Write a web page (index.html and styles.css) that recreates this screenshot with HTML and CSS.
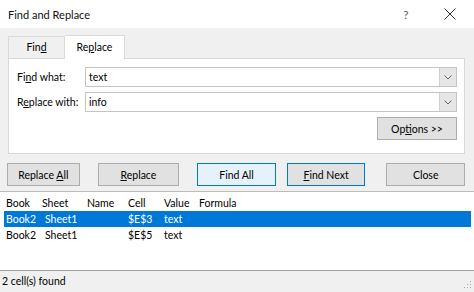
FILE: index.html
```html
<!DOCTYPE html>
<html lang="en">
	<head>
		<meta charset="UTF-8" />
		<title>Find and Replace</title>
		<link rel="stylesheet" href="styles.css">
	</head>
	<body>
		<div class="window">
			<div class="titlebar">
				<span class="title">Find and Replace</span>
				<span class="help">?</span>
				<span class="close">
					<svg width="12" height="12" viewBox="0 0 12 12">
						<path d="M0.5 0.5 L11.5 11.5 M11.5 0.5 L0.5 11.5" stroke="#333" stroke-width="1" fill="none" />
					</svg>
				</span>
			</div>

			<div class="main">
				<div class="tabs">
					<div class="tab">Fin<u>d</u></div>
					<div class="tab active">Re<u>p</u>lace</div>
				</div>

				<div class="panel">
					<div class="field">
						<label>Fi<u>n</u>d what:</label>
						<div class="combo">
							<span class="value">text</span>
							<span class="drop">
								<svg width="8" height="5" viewBox="0 0 8 5"><path d="M0.5 0.5 L4 4 L7.5 0.5" stroke="#666" fill="none" /></svg>
							</span>
						</div>
					</div>
					<div class="field">
						<label>R<u>e</u>place with:</label>
						<div class="combo">
							<span class="value">info</span>
							<span class="drop">
								<svg width="8" height="5" viewBox="0 0 8 5"><path d="M0.5 0.5 L4 4 L7.5 0.5" stroke="#666" fill="none" /></svg>
							</span>
						</div>
					</div>
					<div class="panel-foot">
						<button class="btn options">Op<u>t</u>ions &gt;&gt;</button>
					</div>
				</div>

				<div class="actions">
					<button class="btn replace-all">Replace <u>A</u>ll</button>
					<button class="btn replace"><u>R</u>eplace</button>
					<button class="btn find-all">Find All</button>
					<button class="btn find-next"><u>F</u>ind Next</button>
					<button class="btn close-btn">Close</button>
				</div>
			</div>

			<div class="results">
				<div class="row head">
					<span>Book</span><span>Sheet</span><span>Name</span><span>Cell</span><span>Value</span><span>Formula</span>
				</div>
				<div class="row selected">
					<span>Book2</span><span class="sheet">Sheet1</span><span></span><span>$E$3</span><span>text</span><span></span>
				</div>
				<div class="row">
					<span>Book2</span><span class="sheet">Sheet1</span><span></span><span>$E$5</span><span>text</span><span></span>
				</div>
			</div>

			<div class="status">
				<span>2 cell(s) found</span>
				<svg class="grip" width="8" height="8" viewBox="0 0 8 8">
					<rect x="6" y="0" width="1" height="1" fill="#aaa" />
					<rect x="3" y="3" width="1" height="1" fill="#aaa" />
					<rect x="6" y="3" width="1" height="1" fill="#aaa" />
					<rect x="0" y="6" width="1" height="1" fill="#aaa" />
					<rect x="3" y="6" width="1" height="1" fill="#aaa" />
					<rect x="6" y="6" width="1" height="1" fill="#aaa" />
				</svg>
			</div>
		</div>
	</body>
</html>
```

FILE: styles.css
```css
body {
	margin: 0;
	font-family: Lato, "Noto Sans", sans-serif;
	font-size: 10.5px;
	color: #000;
	background: #fff;
}
.window {
	width: 474px;
	height: 292px;
	overflow: hidden;
	background: #f0f0f0;
}
.titlebar {
	height: 28px;
	background: #fff;
	display: flex;
	align-items: center;
	padding: 0 0 0 8px;
}
.title {
	flex: 1;
	font-size: 11px;
	color: #111;
}
.help {
	width: 16px;
	text-align: center;
	color: #555;
	font-size: 11px;
	margin-right: 30px;
}
.close {
	width: 12px;
	height: 12px;
	margin-right: 18px;
	display: flex;
}
.main {
	padding: 7px 9px 5px 8px;
}
.tabs {
	display: flex;
	align-items: flex-end;
	height: 23px;
}
.tab {
	width: 55px;
	height: 21px;
	line-height: 21px;
	text-align: center;
	border: 1px solid #d9d9d9;
	border-bottom: none;
	background: #f0f0f0;
}
.tab.active {
	width: 59px;
	height: 23px;
	line-height: 23px;
	background: #fff;
	border-left: none;
	margin-bottom: -1px;
	position: relative;
}
.panel {
	height: 96px;
	box-sizing: border-box;
	background: #fff;
	border: 1px solid #d9d9d9;
	padding: 8px 7px 0 8px;
}
.field {
	display: flex;
	align-items: center;
	margin-bottom: 5px;
}
.field label {
	width: 68px;
}
.combo {
	flex: 1;
	height: 20px;
	box-sizing: border-box;
	border: 1px solid #c4c4c4;
	display: flex;
	align-items: center;
}
.combo .value {
	flex: 1;
	padding-left: 3px;
}
.drop {
	width: 17px;
	height: 18px;
	box-sizing: border-box;
	background: #e6e6e6;
	border-left: 1px solid #d0d0d0;
	display: flex;
	align-items: center;
	justify-content: center;
}
.panel-foot {
	display: flex;
	justify-content: flex-end;
	margin-top: 5px;
}
.btn {
	font-family: inherit;
	font-size: 10.5px;
	color: #000;
	height: 23px;
	padding: 0;
	background: #e1e1e1;
	border: 1px solid #adadad;
}
.options {
	width: 80px;
}
.actions {
	display: flex;
	margin-top: 9px;
}
.replace-all {
	width: 73px;
	margin-left: -1px;
}
.replace {
	width: 82px;
	margin-left: 18px;
}
.find-all {
	width: 79px;
	margin-left: 18px;
	background: #e5f1fb;
	border-color: #0078d7;
}
.find-next {
	width: 79px;
	margin-left: 11px;
	border-color: #0078d7;
}
.close-btn {
	width: 79px;
	margin-left: 21px;
}
.results {
	height: 80px;
	box-sizing: border-box;
	background: #fff;
	border-top: 1px solid #bcbcbc;
	border-bottom: 1px solid #a0a0a0;
	padding: 3px 3px 0 4px;
}
.row {
	display: grid;
	grid-template-columns: 36px 45px 41px 36px 35px 1fr;
	height: 16px;
	line-height: 16px;
	padding-left: 2px;
}
.row.head {
	height: 16px;
}
.row .sheet {
	padding-left: 3px;
}
.row.selected {
	background: #0078d7;
	color: #fff;
}
.status {
	height: 20px;
	display: flex;
	align-items: center;
	justify-content: space-between;
	padding: 0 2px 0 2px;
}
.grip {
	align-self: flex-end;
	margin-bottom: 2px;
}
```
